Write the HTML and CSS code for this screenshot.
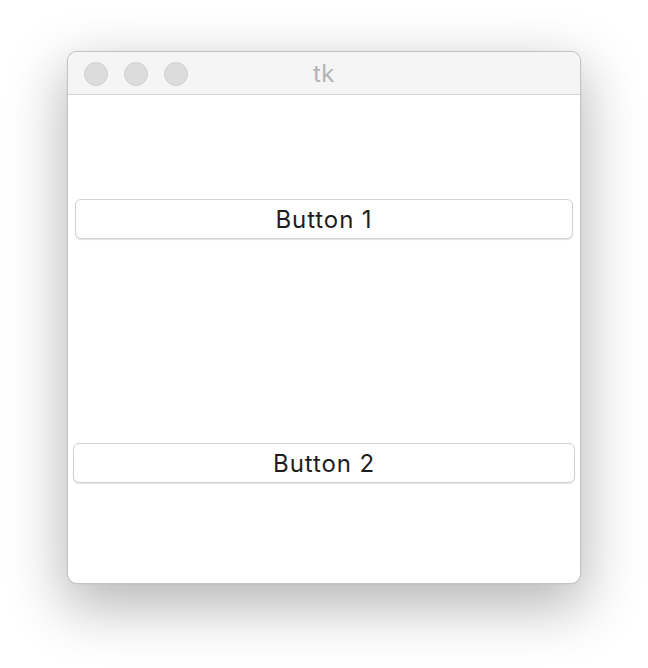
FILE: index.html
```html
<!DOCTYPE html>
<html lang="en">
<head>
    <title>tk</title>
    <link rel="stylesheet" href="styles.css">
</head>
<body>
    <!--Window-->
    <div class="window">
        <div class="titlebar">
            <div class="lights">
                <span class="light"></span>
                <span class="light"></span>
                <span class="light"></span>
            </div>
            <div class="title">tk</div>
        </div>
        <div class="content">
            <button class="btn btn-one">Button 1</button>
            <button class="btn btn-two">Button 2</button>
        </div>
    </div>
</body>
</html>
```

FILE: styles.css
```css
/*global styling*/
* {
    box-sizing: border-box;
    font-family: "Inter", "Liberation Sans", sans-serif;
}

html {
    height: 100%;
}

body {
    margin: 0;
    height: 100%;
    padding: 51px 0 0 67px;
    background-color: #ffffff;
}

/*window frame*/
.window {
    width: 514px;
    height: 533px;
    border: 1px solid #c4c4c4;
    border-radius: 10px;
    overflow: hidden;
    background-color: #ffffff;
    box-shadow: 0 20px 55px 4px rgba(0, 0, 0, 0.28), 0 0 1px rgba(0, 0, 0, 0.2);
    display: flex;
    flex-direction: column;
}

/*title bar*/
.titlebar {
    height: 43px;
    background-color: #f5f5f5;
    border-bottom: 1px solid #d6d6d6;
    display: flex;
    align-items: center;
    position: relative;
    flex-shrink: 0;
}

.lights {
    display: flex;
    gap: 16px;
    padding-left: 16px;
    padding-top: 1px;
}

.light {
    width: 24px;
    height: 24px;
    border-radius: 50%;
    background-color: #dcdcdc;
    border: 1px solid #d0d0d0;
}

.title {
    position: absolute;
    left: 0;
    right: 0;
    text-align: center;
    color: #b3b3b3;
    font-size: 24px;
    letter-spacing: 0.6px;
    padding-top: 1px;
    pointer-events: none;
}

/*content area*/
.content {
    flex: 1;
    display: flex;
    flex-direction: column;
    padding-top: 104px;
}

.btn {
    height: 40px;
    background-color: #ffffff;
    border: 1px solid #d2d2d2;
    border-radius: 6px;
    box-shadow: 0 1px 1px rgba(0, 0, 0, 0.12);
    color: #1e1e1e;
    font-size: 24px;
    letter-spacing: 0.9px;
    padding: 0;
}

.btn-one {
    margin: 0 7px 0 7px;
}

.btn-two {
    margin: 204px 5px 0 5px;
}
```
